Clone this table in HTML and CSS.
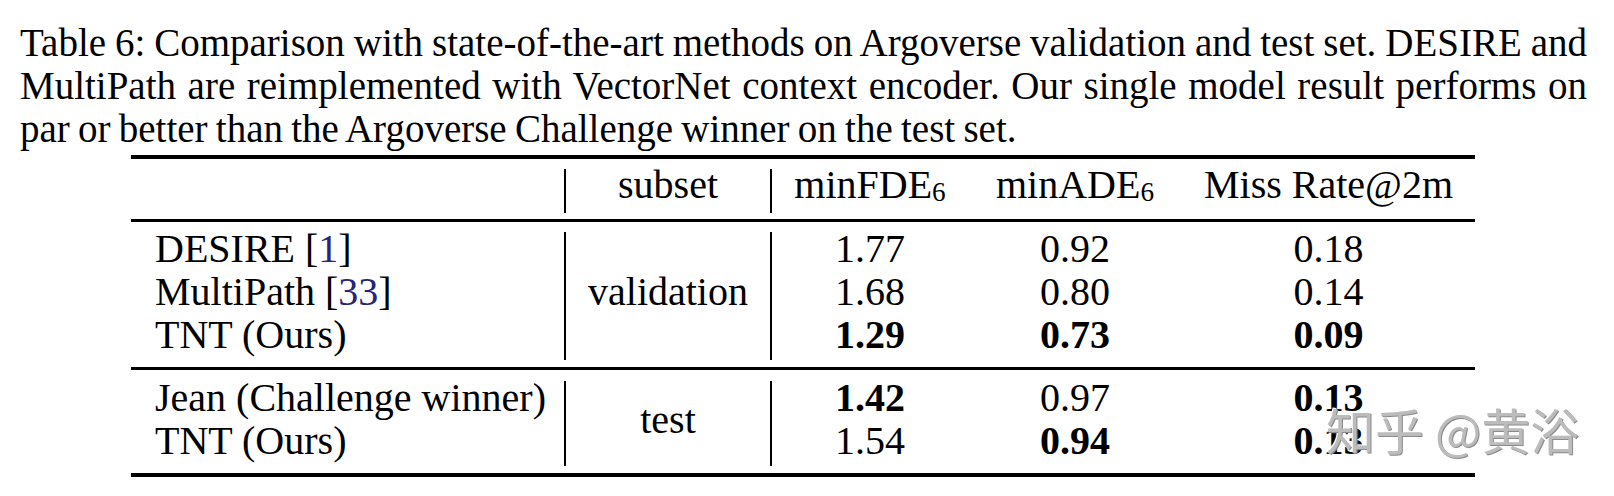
FILE: index.html
```html
<!DOCTYPE html>
<html lang="en">
<head>
  <meta charset="UTF-8">
  <title>Table 6</title>
  <link rel="stylesheet" href="styles.css">
</head>
<body>
  <!-- caption -->
  <div class="caption">
    <div class="cap-line">Table 6: Comparison with state-of-the-art methods on Argoverse validation and test set. DESIRE and</div>
    <div class="cap-line">MultiPath are reimplemented with VectorNet context encoder. Our single model result performs on</div>
    <div class="cap-line last">par or better than the Argoverse Challenge winner on the test set.</div>
  </div>

  <div class="result-table">
    <div class="rule thick"></div>

    <div class="row head">
      <div class="cell name"></div>
      <div class="cell sep">subset</div>
      <div class="cell">minFDE<sub>6</sub></div>
      <div class="cell">minADE<sub>6</sub></div>
      <div class="cell">Miss Rate@2m</div>
    </div>

    <div class="rule"></div>

    <div class="row body first">
      <div class="cell name">
        <div class="lines">
          <div>DESIRE [<span class="cite">1</span>]</div>
          <div>MultiPath [<span class="cite">33</span>]</div>
          <div>TNT (Ours)</div>
        </div>
      </div>
      <div class="cell sep mid"><div class="lines">validation</div></div>
      <div class="cell">
        <div class="lines">
          <div>1.77</div>
          <div>1.68</div>
          <div class="best">1.29</div>
        </div>
      </div>
      <div class="cell">
        <div class="lines">
          <div>0.92</div>
          <div>0.80</div>
          <div class="best">0.73</div>
        </div>
      </div>
      <div class="cell">
        <div class="lines">
          <div>0.18</div>
          <div>0.14</div>
          <div class="best">0.09</div>
        </div>
      </div>
    </div>

    <div class="rule"></div>

    <div class="row body second">
      <div class="cell name">
        <div class="lines">
          <div>Jean (Challenge winner)</div>
          <div>TNT (Ours)</div>
        </div>
      </div>
      <div class="cell sep mid"><div class="lines">test</div></div>
      <div class="cell">
        <div class="lines">
          <div class="best">1.42</div>
          <div>1.54</div>
        </div>
      </div>
      <div class="cell">
        <div class="lines">
          <div>0.97</div>
          <div class="best">0.94</div>
        </div>
      </div>
      <div class="cell">
        <div class="lines">
          <div class="best">0.13</div>
          <div class="best">0.13</div>
        </div>
      </div>
    </div>

    <div class="rule thick"></div>
  </div>

  <!-- 水印 -->
  <div class="watermark">知乎 @黄浴</div>
</body>
</html>
```

FILE: styles.css
```css
/* page */
* {
  margin: 0;
  padding: 0;
  box-sizing: border-box;
}

body {
  position: relative;
  width: 1614px;
  height: 496px;
  background-color: #fff;
  color: #000;
  font-family: "Liberation Serif", "Times New Roman", serif;
  font-size: 40px;
  overflow: hidden;
}

/* caption */
.caption {
  width: 1567px;
  margin-left: 20px;
  padding-top: 21px;
  font-size: 39px;
  line-height: 43px;
  word-spacing: -1.5px;
}

.cap-line {
  white-space: nowrap;
  text-align: justify;
  text-align-last: justify;
}

.cap-line.last {
  text-align-last: left;
}

/* table */
.result-table {
  width: 1344px;
  margin: 5px 0 0 131px;
}

.rule {
  height: 3px;
  background-color: #000;
}

.rule.thick {
  height: 4px;
}

.row {
  display: grid;
  grid-template-columns: 435px 206px 196px 214px 293px;
}

.cell {
  text-align: center;
  white-space: nowrap;
}

.cell.name {
  text-align: left;
  padding-left: 24px;
  border-right: 2px solid #000;
}

.cell.sep {
  border-right: 2px solid #000;
}

.row.head {
  padding: 10px 0 6px;
}

.row.head .cell {
  line-height: 32px;
  padding-bottom: 12px;
}

.row.body {
  line-height: 43px;
}

.row.body.first {
  padding: 10px 0 7px;
}

.row.body.second {
  padding: 11px 0 7px;
}

.row.body .cell {
  padding-bottom: 4px;
}

.lines {
  margin-top: -5px;
}

.cell.mid {
  display: flex;
  align-items: center;
  justify-content: center;
}

.best {
  font-weight: bold;
}

.cite {
  color: #25257a;
}

sub {
  font-size: 0.68em;
  line-height: 0;
  vertical-align: -0.12em;
}

/* watermark */
.watermark {
  position: absolute;
  left: 1326px;
  top: 399px;
  font-family: "Noto Sans CJK SC", sans-serif;
  font-size: 49px;
  line-height: 60px;
  color: #bcbcbc;
  text-shadow: 1px 1px 0 #8c8c8c, -1px -1px 0 #fff, 0 0 3px #fff;
  white-space: nowrap;
}
```
